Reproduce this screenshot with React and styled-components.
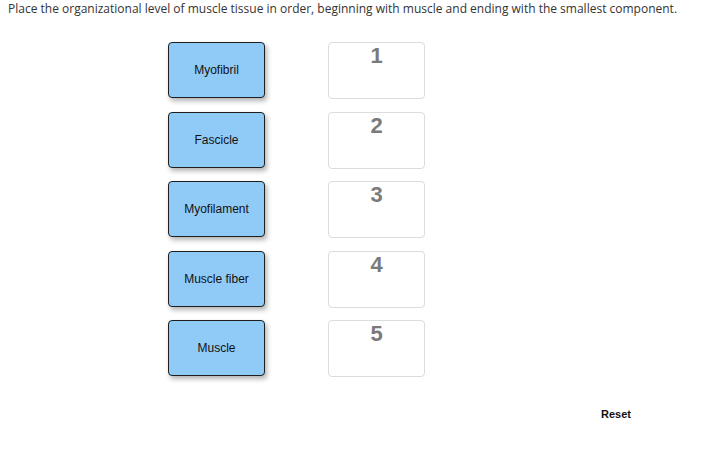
import React from 'react';
import styled, { createGlobalStyle } from 'styled-components';

const GlobalStyle = createGlobalStyle`
  body {
    margin: 0;
    background: #fff;
  }
`;

const Page = styled.div`
  width: 723px;
  height: 458px;
  box-sizing: border-box;
  padding: 1px 8px 0;
`;

const Prompt = styled.p`
  margin: 0;
  font-family: "Open Sans", "Lato", sans-serif;
  font-size: 12px;
  line-height: 16px;
  color: #333;
`;

const Board = styled.div`
  display: grid;
  grid-template-columns: 97px 97px;
  grid-auto-rows: 57px;
  column-gap: 63px;
  row-gap: 12.5px;
  margin: 25px 0 0 160px;
`;

const Card = styled.div`
  display: flex;
  align-items: center;
  justify-content: center;
  height: 56px;
  box-sizing: border-box;
  background: #90cbf8;
  border: 1px solid #1e1e1e;
  border-radius: 4px;
  box-shadow: 2px 3px 5px rgba(0, 0, 0, 0.3);
  font-family: "Liberation Sans", Arial, sans-serif;
  font-size: 12px;
  color: #111;
  cursor: grab;
`;

const Slot = styled.div`
  display: flex;
  justify-content: center;
  box-sizing: border-box;
  height: 57px;
  border: 1px solid #dcdcdc;
  border-radius: 4px;
  background: #fff;
`;

const SlotNumber = styled.span`
  margin-top: 1px;
  font-family: "Liberation Sans", Arial, sans-serif;
  font-weight: bold;
  font-size: 22px;
  line-height: 24px;
  color: #7a7a7a;
`;

const Footer = styled.div`
  display: flex;
  justify-content: flex-end;
  padding-right: 84px;
  margin-top: 31px;
`;

const ResetButton = styled.button`
  border: none;
  background: transparent;
  padding: 0;
  font-family: "Liberation Sans", Arial, sans-serif;
  font-weight: bold;
  font-size: 11px;
  color: #111;
  cursor: pointer;
`;

const items = ['Myofibril', 'Fascicle', 'Myofilament', 'Muscle fiber', 'Muscle'];

export default function App() {
  return (
    <Page>
      <GlobalStyle />
      <Prompt>
        Place the organizational level of muscle tissue in order, beginning with muscle and ending with the smallest component.
      </Prompt>
      <Board>
        {items.map((name, i) => (
          <React.Fragment key={name}>
            <Card>{name}</Card>
            <Slot>
              <SlotNumber>{i + 1}</SlotNumber>
            </Slot>
          </React.Fragment>
        ))}
      </Board>
      <Footer>
        <ResetButton>Reset</ResetButton>
      </Footer>
    </Page>
  );
}
